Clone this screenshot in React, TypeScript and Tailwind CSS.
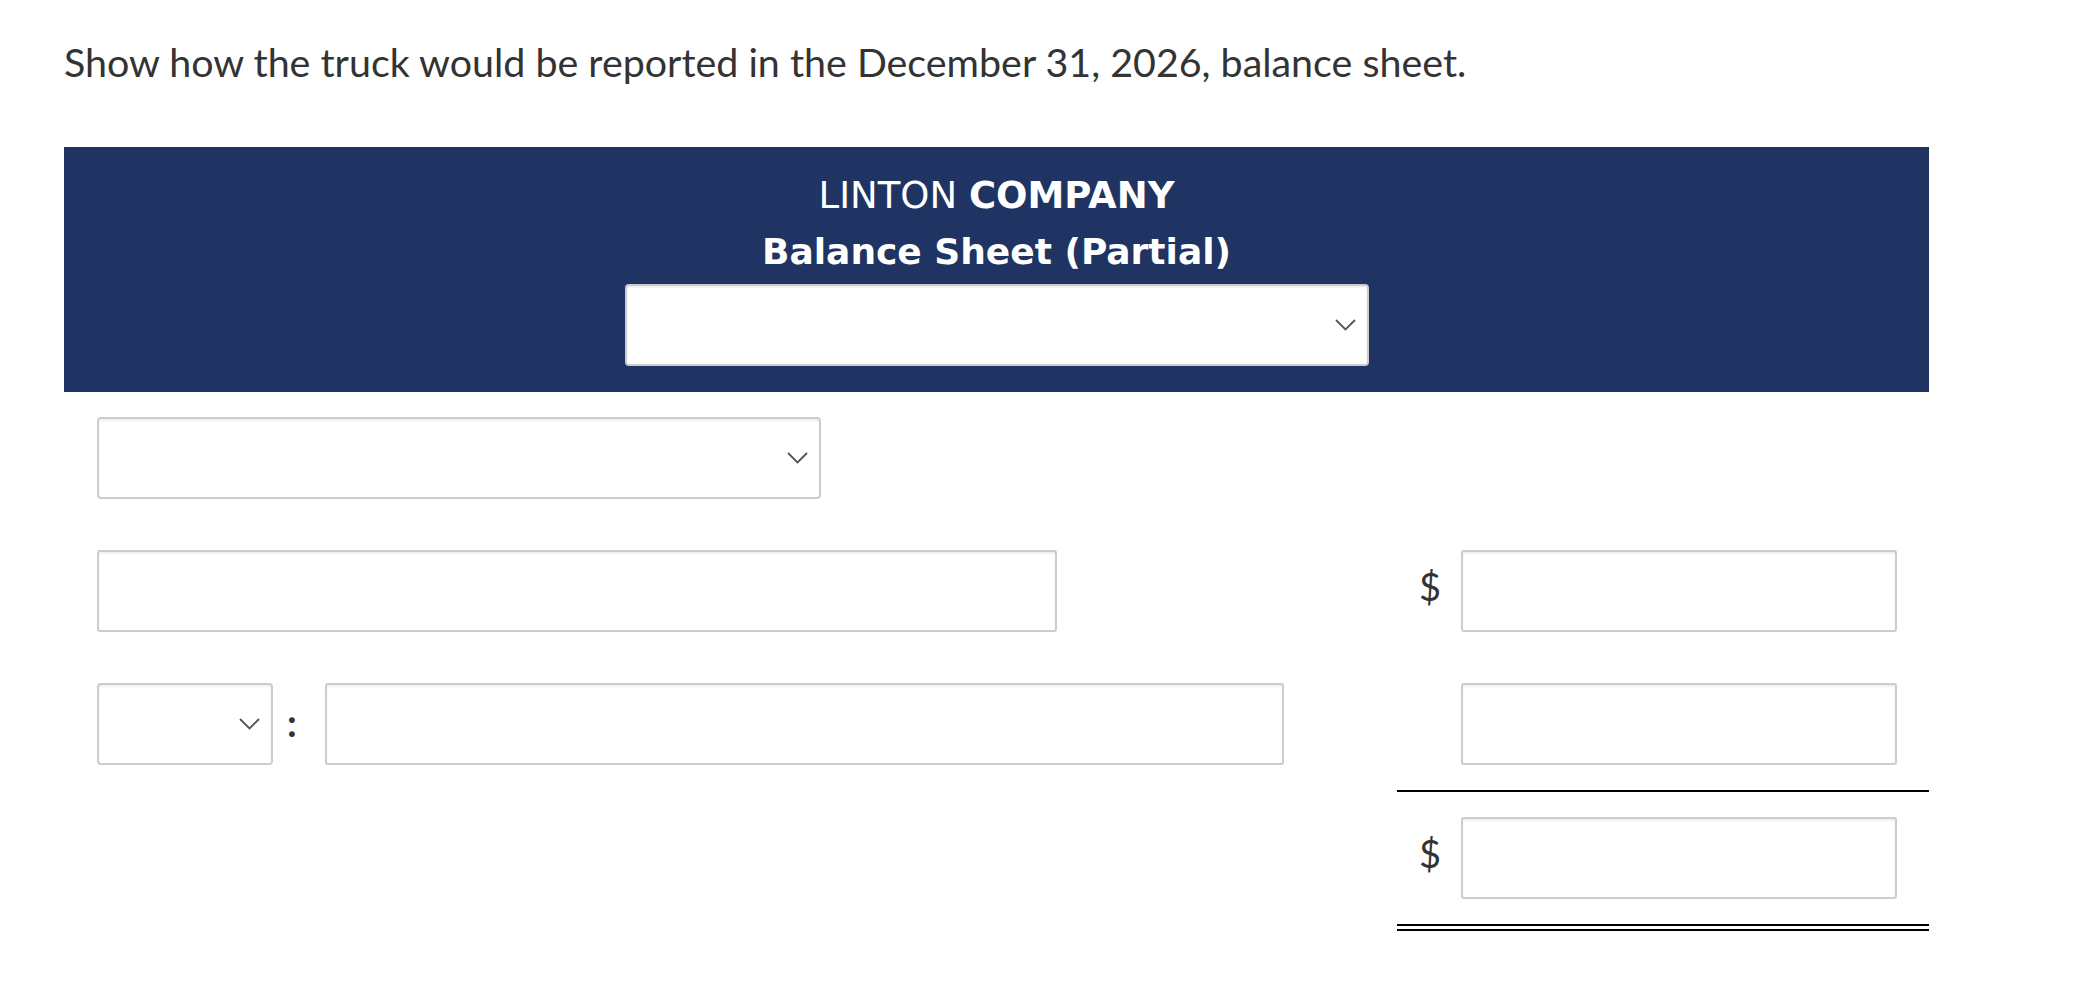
import React from "react";

const Chevron = () => (
  <svg width="21" height="12" viewBox="0 0 21 12" className="shrink-0">
    <path d="M1 1 L10.5 10.5 L20 1" fill="none" stroke="#555" strokeWidth="1.8" />
  </svg>
);

const Select = ({ w }: { w: string }) => (
  <div
    className={`${w} h-[82px] bg-white border-2 border-[#cccccc] rounded-[4px] shadow-[inset_0_2px_2px_rgba(0,0,0,0.06)] flex items-center justify-end pr-[11px]`}
  >
    <Chevron />
  </div>
);

const Input = ({ w }: { w: string }) => (
  <div
    className={`${w} h-[82px] bg-white border-2 border-[#cccccc] rounded-[3px] shadow-[inset_0_2px_2px_rgba(0,0,0,0.06)]`}
  />
);

const Dollar = ({ show }: { show: boolean }) => (
  <div className="w-[64px] flex justify-end pr-[20px] mb-[10px] text-[38px] text-[#333] leading-none font-['Lato',sans-serif]">
    {show ? "$" : ""}
  </div>
);

export default function App() {
  return (
    <div className="w-[2077px] min-h-[997px] bg-white pl-[64px] pr-[148px] font-['Lato',sans-serif]">
      <div className="pt-[36px] text-[39.4px] leading-[52px] text-[#333]">
        Show how the truck would be reported in the December 31, 2026, balance sheet.
      </div>

      <div className="mt-[59px] h-[245px] bg-[#1f3462] flex flex-col items-center text-white font-['DejaVu_Sans',sans-serif]">
        <div className="mt-[25px] text-[37px] leading-[48px]">
          LINTON <span className="font-bold">COMPANY</span>
        </div>
        <div className="text-[36px] leading-[48px] font-bold mt-[8px]">Balance Sheet (Partial)</div>
        <div className="mt-[8px]">
          <Select w="w-[744px]" />
        </div>
      </div>

      <div className="pl-[33px] mt-[25px]">
        <Select w="w-[724px]" />
      </div>

      <div className="flex mt-[51px]">
        <div className="flex-1 pl-[33px]">
          <Input w="w-[960px]" />
        </div>
        <div className="w-[532px] flex items-center">
          <Dollar show />
          <Input w="w-[436px]" />
        </div>
      </div>

      <div className="flex items-start mt-[51px]">
        <div className="flex-1 pl-[33px] flex items-center">
          <Select w="w-[176px]" />
          <div className="w-[52px] pl-[14px] text-left text-[38px] font-bold text-[#333] leading-none mb-[4px]">:</div>
          <Input w="w-[959px]" />
        </div>
        <div className="w-[532px] flex items-center pb-[25px] border-b-2 border-black">
          <Dollar show={false} />
          <Input w="w-[436px]" />
        </div>
      </div>

      <div className="flex justify-end mt-[25px]">
        <div className="w-[532px] flex items-center pb-[25px] border-b-[7px] border-double border-black">
          <Dollar show />
          <Input w="w-[436px]" />
        </div>
      </div>
    </div>
  );
}
